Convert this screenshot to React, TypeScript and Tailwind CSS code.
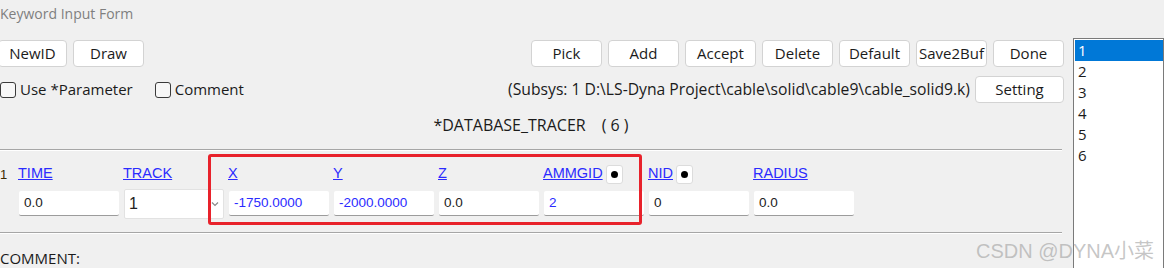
import React from "react";

const ui = "font-['Open_Sans','Noto_Sans',sans-serif]";
const mono = "font-['Liberation_Sans',Arial,sans-serif]";

function Btn({ label, w = "w-[71px]" }: { label: string; w?: string }) {
  return (
    <button
      className={`${w} h-[27px] shrink-0 rounded-[4px] border border-[#d3d3d3] bg-white text-[15px] leading-none text-[#1b1b1b]`}
    >
      {label}
    </button>
  );
}

function Check({ label }: { label: string }) {
  return (
    <label className="flex items-center gap-[4px] text-[15px] text-[#1b1b1b]">
      <span className="h-[16px] w-[16px] rounded-[3px] border border-[#3a3a3a] bg-[#f7f7f7]" />
      {label}
    </label>
  );
}

function Dot() {
  return (
    <span className="ml-[3px] flex h-[19px] w-[17px] items-center justify-center rounded-[3px] border border-[#dcdcdc] bg-white">
      <span className="h-[7px] w-[7px] rounded-full bg-black" />
    </span>
  );
}

type Field = { name: string; value: string; blue?: boolean; dot?: boolean; combo?: boolean };

const fields: Field[] = [
  { name: "TIME", value: "0.0" },
  { name: "TRACK", value: "1", combo: true },
  { name: "X", value: "-1750.0000", blue: true },
  { name: "Y", value: "-2000.0000", blue: true },
  { name: "Z", value: "0.0" },
  { name: "AMMGID", value: "2", blue: true, dot: true },
  { name: "NID", value: "0", dot: true },
  { name: "RADIUS", value: "0.0" },
];

function Column({ f }: { f: Field }) {
  return (
    <div className="flex w-[100px] shrink-0 flex-col">
      <div className="-ml-[1px] flex h-[20px] items-center pt-[2px]">
        <span className={`${mono} text-[14.5px] text-[#2b2bff] underline`}>{f.name}</span>
        {f.dot && <Dot />}
      </div>
      {f.combo ? (
        <div className="relative mt-[6px] flex h-[30px] items-center rounded-[2px] border border-[#e2e2e2] bg-white pl-[4px]">
          <span className={`${mono} text-[16px] text-[#222]`}>{f.value}</span>
          <svg
            className="absolute right-[4px] top-[11px]"
            width="8"
            height="6"
            viewBox="0 0 8 6"
            fill="none"
            stroke="#8a8a8a"
            strokeWidth="1.2"
          >
            <polyline points="1,1.5 4,4.5 7,1.5" />
          </svg>
        </div>
      ) : (
        <div className="mt-[8px] flex h-[25px] items-center rounded-[2px] border-b border-b-[#9c9c9c] bg-white pl-[5px]">
          <span className={`${mono} text-[13.5px] ${f.blue ? "text-[#2b2bff]" : "text-[#222]"}`}>
            {f.value}
          </span>
        </div>
      )}
    </div>
  );
}

function Rule() {
  return <div className="h-[2px] w-[1062px] border-t border-t-[#a6a6a6] border-b border-b-white" />;
}

export default function App() {
  return (
    <div className={`${ui} relative h-[268px] w-[1164px] overflow-hidden bg-[#f0f0f0]`}>
      <div className="h-[38px] pt-[3px] text-[14px] text-[#7f7f7f]">Keyword Input Form</div>

      <div className="flex">
        <div className="w-[1073px] shrink-0 pt-[2px]">
          {/* buttons */}
          <div className="flex w-[1064px] items-center justify-between">
            <div className="-ml-[2px] flex gap-[6px]">
              <Btn label="NewID" w="w-[69px]" />
              <Btn label="Draw" />
            </div>
            <div className="flex gap-[6px]">
              <Btn label="Pick" />
              <Btn label="Add" />
              <Btn label="Accept" />
              <Btn label="Delete" />
              <Btn label="Default" />
              <Btn label="Save2Buf" />
              <Btn label="Done" />
            </div>
          </div>

          {/* options + path */}
          <div className="mt-[9px] flex h-[27px] w-[1064px] items-center">
            <Check label="Use *Parameter" />
            <div className="ml-[22px]">
              <Check label="Comment" />
            </div>
            <span className="ml-auto mr-[5px] text-[15.7px] text-[#1b1b1b]">
              (Subsys: 1 D:\LS-Dyna Project\cable\solid\cable9\cable_solid9.k)
            </span>
            <Btn label="Setting" w="w-[89px]" />
          </div>

          {/* keyword */}
          <div className="mt-[10px] flex h-[24px] w-[1062px] items-center justify-center text-[16px] text-[#1b1b1b]">
            <span>*DATABASE_TRACER</span>
            <span className="ml-[16px]">( 6 )</span>
          </div>

          <div className="mt-[12px]">
            <Rule />
          </div>

          {/* card */}
          <div className="flex pt-[12px]">
            <div className="w-[19px] shrink-0">
              <span className={`${mono} block h-[20px] pt-[2px] text-[13px] leading-[20px] text-[#3b2a00]`}>1</span>
            </div>
            <div className="flex gap-[5px]">
              {fields.map((f) => (
                <Column key={f.name} f={f} />
              ))}
            </div>
          </div>

          <div className="mt-[13px]">
            <Rule />
          </div>

          <div className="mt-[14px] flex h-[20px] items-center text-[15px] text-[#1b1b1b]">COMMENT:</div>
        </div>

        {/* list */}
        <div className="h-[240px] flex-1 border border-[#7a7a7a] bg-white pl-[1px] pt-[1px]">
          {["1", "2", "3", "4", "5", "6"].map((n, i) => (
            <div
              key={n}
              className={`h-[21px] pl-[3px] text-[15px] leading-[21px] ${
                i === 0 ? "bg-[#0078d7] text-white" : "text-[#1b1b1b]"
              }`}
            >
              {n}
            </div>
          ))}
        </div>
      </div>

      {/* highlight box */}
      <div className="pointer-events-none absolute left-[208px] top-[154px] h-[71px] w-[434px] rounded-[3px] border-[3px] border-[#e8222b]" />

      {/* watermark */}
      <div className="pointer-events-none absolute left-[976px] top-[236px] font-['Liberation_Sans','Noto_Sans_CJK_SC',sans-serif] text-[20px] text-[#a0a0a0]/60">
        CSDN @DYNA小菜
      </div>
    </div>
  );
}
